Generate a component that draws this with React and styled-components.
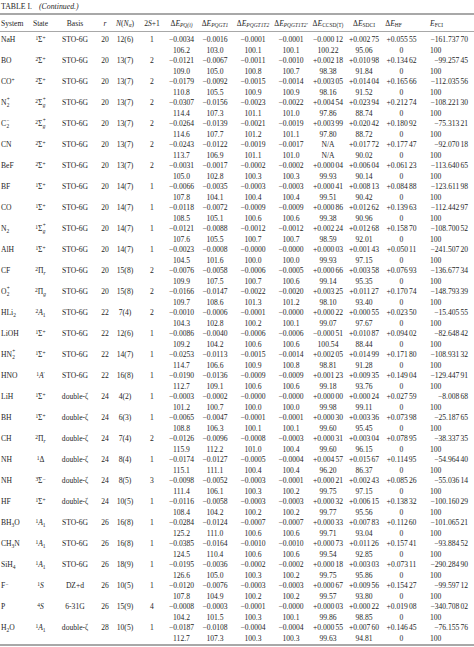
import React from "react";
import styled, { createGlobalStyle } from "styled-components";

const GlobalStyle = createGlobalStyle`
  body {
    margin: 0;
    background: #fff;
    font-family: "Liberation Serif", "Times New Roman", serif;
    color: #262626;
  }
`;

const Page = styled.div`
  width: 474px;
  height: 647px;
  overflow: hidden;
`;

const Caption = styled.div`
  font-size: 7.8px;
  line-height: 13px;
  height: 13px;
  padding-left: 1px;
  em {
    margin-left: 5px;
  }
`;

const Table = styled.table`
  width: 474px;
  table-layout: fixed;
  border-collapse: collapse;
  font-size: 7.6px;
  border-bottom: 2px solid #a8a8a8;
`;

const HeadRow = styled.tr`
  border-top: 2px solid #a8a8a8;
  border-bottom: 1px solid #a8a8a8;
  th {
    height: 15px;
    padding: 1px 0 0;
    font-weight: normal;
    white-space: nowrap;
    line-height: 10px;
  }
`;

const Row = styled.tr`
  td {
    height: 10.5px;
    padding-top: ${(p) => (p.$first ? "3px" : "0")};
  }
`;

const Cell = styled.td`
  padding: 0;
  line-height: 10.5px;
  white-space: nowrap;
  word-spacing: -0.9px;
  text-align: ${(p) => p.$align || "center"};
  padding-left: ${(p) => p.$indent || 0}px;
  padding-right: ${(p) => p.$right || 0}px;
`;

const Head = styled.th`
  text-align: ${(p) => p.$align || "center"};
  padding-left: ${(p) => p.$indent || 0}px !important;
  padding-right: ${(p) => p.$right || 0}px !important;
`;

const Sup = styled.span`
  font-size: 0.72em;
  position: relative;
  top: -0.42em;
`;

const Sub = styled.span`
  font-size: 0.72em;
  position: relative;
  top: 0.28em;
  font-style: ${(p) => (p.$italic ? "italic" : "normal")};
`;

const Stack = styled.span`
  display: inline-block;
  position: relative;
  width: 3.2px;
  height: 1px;
  margin-left: 0.3px;
  span {
    position: absolute;
    left: 0;
    font-size: 5.3px;
    line-height: 1;
  }
  span:first-child {
    top: -6.8px;
  }
  span:last-child {
    top: -1.1px;
  }
`;

const It = styled.i`
  font-style: italic;
`;

const SupSub = ({ sup, sub }) => (
  <Stack>
    <span>{sup}</span>
    <span>{sub}</span>
  </Stack>
);

const State = ({ pre, sym, sup, sub, it }) => (
  <>
    <Sup>{pre}</Sup>
    {it ? <It>{sym}</It> : sym}
    {sup && sub ? <SupSub sup={sup} sub={sub} /> : null}
    {sup && !sub ? <Sup>{sup}</Sup> : null}
    {sub && !sup ? <Sub $italic={/[a-z]/.test(sub)}>{sub}</Sub> : null}
  </>
);

const S = (p) => <State pre={p.pre} sym="Σ" sup={p.sup || "+"} sub={p.sub} />;
const A1 = () => <State pre="1" sym="A" it sub="1" />;

const DE = ({ sub, italic }) => (
  <>
    Δ<It>E</It>
    <Sub $italic={italic}>{sub}</Sub>
  </>
);

const rows = [
  ["NaH", <S pre="1" />, "STO-6G", 20, "12(6)", 1, ["−0.0034", "−0.0016", "−0.0001", "−0.0001", "−0.000 12", "+0.002 75", "+0.055 55", "−161.737 70"], ["106.2", "103.0", "100.1", "100.1", "100.22", "95.06", "0", "100"]],
  ["BO", <S pre="2" />, "STO-6G", 20, "13(7)", 2, ["−0.0121", "−0.0067", "−0.0011", "−0.0010", "+0.002 18", "+0.010 98", "+0.134 62", "−99.257 45"], ["109.0", "105.0", "100.8", "100.7", "98.38", "91.84", "0", "100"]],
  [<>CO<Sup>+</Sup></>, <S pre="2" />, "STO-6G", 20, "13(7)", 2, ["−0.0179", "−0.0092", "−0.0015", "−0.0014", "+0.003 05", "+0.014 04", "+0.165 66", "−112.035 56"], ["110.8", "105.5", "100.9", "100.9", "98.16", "91.52", "0", "100"]],
  [<>N<SupSub sup="+" sub="2" /></>, <S pre="2" sub={<It>g</It>} />, "STO-6G", 20, "13(7)", 2, ["−0.0307", "−0.0156", "−0.0023", "−0.0022", "+0.004 54", "+0.023 94", "+0.212 74", "−108.221 30"], ["114.4", "107.3", "101.1", "101.0", "97.86", "88.74", "0", "100"]],
  [<>C<SupSub sup="−" sub="2" /></>, <S pre="2" sub={<It>g</It>} />, "STO-6G", 20, "13(7)", 2, ["−0.0264", "−0.0139", "−0.0021", "−0.0019", "+0.003 99", "+0.020 42", "+0.180 92", "−75.313 21"], ["114.6", "107.7", "101.2", "101.1", "97.80", "88.72", "0", "100"]],
  ["CN", <S pre="2" />, "STO-6G", 20, "13(7)", 2, ["−0.0243", "−0.0122", "−0.0019", "−0.0017", "N/A", "+0.017 72", "+0.177 47", "−92.070 18"], ["113.7", "106.9", "101.1", "101.0", "N/A", "90.02", "0", "100"]],
  ["BeF", <S pre="2" />, "STO-6G", 20, "13(7)", 2, ["−0.0031", "−0.0017", "−0.0002", "−0.0002", "+0.000 04", "+0.006 04", "+0.061 23", "−113.640 65"], ["105.0", "102.8", "100.3", "100.3", "99.93", "90.14", "0", "100"]],
  ["BF", <S pre="1" />, "STO-6G", 20, "14(7)", 1, ["−0.0066", "−0.0035", "−0.0003", "−0.0003", "+0.000 41", "+0.008 13", "+0.084 88", "−123.611 98"], ["107.8", "104.1", "100.4", "100.4", "99.51", "90.42", "0", "100"]],
  ["CO", <S pre="1" />, "STO-6G", 20, "14(7)", 1, ["−0.0118", "−0.0072", "−0.0009", "−0.0009", "+0.000 86", "+0.012 62", "+0.139 63", "−112.442 97"], ["108.5", "105.1", "100.6", "100.6", "99.38", "90.96", "0", "100"]],
  [<>N<Sub>2</Sub></>, <S pre="1" sub={<It>g</It>} />, "STO-6G", 20, "14(7)", 1, ["−0.0121", "−0.0088", "−0.0012", "−0.0012", "+0.002 24", "+0.012 68", "+0.158 70", "−108.700 52"], ["107.6", "105.5", "100.7", "100.7", "98.59", "92.01", "0", "100"]],
  ["AlH", <S pre="1" />, "STO-6G", 20, "14(7)", 1, ["−0.0023", "−0.0008", "−0.0000", "−0.0000", "+0.000 03", "+0.001 43", "+0.050 11", "−241.507 20"], ["104.5", "101.6", "100.0", "100.0", "99.93", "97.15", "0", "100"]],
  ["CF", <State pre="2" sym="Π" sub="r" />, "STO-6G", 20, "15(8)", 2, ["−0.0076", "−0.0058", "−0.0006", "−0.0005", "+0.000 66", "+0.003 58", "+0.076 93", "−136.677 34"], ["109.9", "107.5", "100.7", "100.6", "99.14", "95.35", "0", "100"]],
  [<>O<SupSub sup="+" sub="2" /></>, <State pre="2" sym="Π" sub="g" />, "STO-6G", 20, "15(8)", 2, ["−0.0166", "−0.0147", "−0.0022", "−0.0020", "+0.003 25", "+0.011 27", "+0.170 74", "−148.793 39"], ["109.7", "108.6", "101.3", "101.2", "98.10", "93.40", "0", "100"]],
  [<>HLi<Sub>2</Sub></>, <State pre="2" sym="A" it sub="1" />, "STO-6G", 22, "7(4)", 2, ["−0.0010", "−0.0006", "−0.0001", "−0.0000", "+0.000 22", "+0.000 55", "+0.023 50", "−15.405 55"], ["104.3", "102.8", "100.2", "100.1", "99.07", "97.67", "0", "100"]],
  ["LiOH", <S pre="1" />, "STO-6G", 22, "12(6)", 1, ["−0.0086", "−0.0040", "−0.0006", "−0.0006", "−0.000 51", "+0.010 87", "+0.094 02", "−82.648 42"], ["109.2", "104.2", "100.6", "100.6", "100.54", "88.44", "0", "100"]],
  [<>HN<SupSub sup="+" sub="2" /></>, <S pre="1" />, "STO-6G", 22, "14(7)", 1, ["−0.0253", "−0.0113", "−0.0015", "−0.0014", "+0.002 05", "+0.014 99", "+0.171 80", "−108.931 32"], ["114.7", "106.6", "100.9", "100.8", "98.81", "91.28", "0", "100"]],
  ["HNO", <State pre="1" sym="A" it sup="′" />, "STO-6G", 22, "16(8)", 1, ["−0.0190", "−0.0136", "−0.0009", "−0.0009", "+0.001 23", "+0.009 35", "+0.149 04", "−129.447 91"], ["112.7", "109.1", "100.6", "100.6", "99.18", "93.76", "0", "100"]],
  ["LiH", <S pre="1" />, "double-ζ", 24, "4(2)", 1, ["−0.0003", "−0.0002", "−0.0000", "−0.0000", "+0.000 00", "+0.000 24", "+0.027 59", "−8.008 68"], ["101.2", "100.7", "100.0", "100.0", "99.98", "99.11", "0", "100"]],
  ["BH", <S pre="1" />, "double-ζ", 24, "6(3)", 1, ["−0.0065", "−0.0047", "−0.0001", "−0.0001", "+0.000 30", "+0.003 36", "+0.073 98", "−25.187 65"], ["108.8", "106.3", "100.1", "100.1", "99.60", "95.45", "0", "100"]],
  ["CH", <State pre="2" sym="Π" sub="r" />, "double-ζ", 24, "7(4)", 2, ["−0.0126", "−0.0096", "−0.0008", "−0.0003", "+0.000 31", "+0.003 04", "+0.078 95", "−38.337 35"], ["115.9", "112.2", "101.0", "100.4", "99.60", "96.15", "0", "100"]],
  ["NH", <State pre="1" sym="Δ" />, "double-ζ", 24, "8(4)", 1, ["−0.0174", "−0.0127", "−0.0005", "−0.0004", "+0.004 57", "+0.015 67", "+0.114 95", "−54.964 40"], ["115.1", "111.1", "100.4", "100.4", "96.20", "86.37", "0", "100"]],
  ["NH", <S pre="3" sup="−" />, "double-ζ", 24, "8(5)", 3, ["−0.0098", "−0.0052", "−0.0003", "−0.0001", "+0.000 21", "+0.002 43", "+0.085 26", "−55.036 14"], ["111.4", "106.1", "100.3", "100.2", "99.75", "97.15", "0", "100"]],
  ["HF", <S pre="1" />, "double-ζ", 24, "10(5)", 1, ["−0.0116", "−0.0058", "−0.0003", "−0.0003", "+0.000 32", "+0.006 15", "+0.138 32", "−100.160 29"], ["108.4", "104.2", "100.2", "100.2", "99.77", "95.56", "0", "100"]],
  [<>BH<Sub>3</Sub>O</>, <A1 />, "STO-6G", 26, "16(8)", 1, ["−0.0284", "−0.0124", "−0.0007", "−0.0007", "+0.000 33", "+0.007 83", "+0.112 60", "−101.065 21"], ["125.2", "111.0", "100.6", "100.6", "99.71", "93.04", "0", "100"]],
  [<>CH<Sub>3</Sub>N</>, <A1 />, "STO-6G", 26, "16(8)", 1, ["−0.0385", "−0.0164", "−0.0010", "−0.0010", "+0.000 73", "+0.011 26", "+0.157 41", "−93.884 52"], ["124.5", "110.4", "100.6", "100.6", "99.54", "92.85", "0", "100"]],
  [<>SiH<Sub>4</Sub></>, <A1 />, "STO-6G", 26, "18(9)", 1, ["−0.0195", "−0.0036", "−0.0002", "−0.0002", "+0.000 18", "+0.003 03", "+0.073 11", "−290.284 90"], ["126.6", "105.0", "100.3", "100.2", "99.75", "95.86", "0", "100"]],
  [<>F<Sup>−</Sup></>, <State pre="1" sym="S" it />, "DZ+d", 26, "10(5)", 1, ["−0.0120", "−0.0076", "−0.0003", "−0.0003", "+0.000 67", "+0.009 56", "+0.154 27", "−99.597 12"], ["107.8", "104.9", "100.2", "100.2", "99.57", "93.80", "0", "100"]],
  ["P", <State pre="4" sym="S" it />, "6-31G", 26, "15(9)", 4, ["−0.0008", "−0.0003", "−0.0001", "−0.0000", "+0.000 03", "+0.000 22", "+0.019 08", "−340.708 02"], ["104.2", "101.5", "100.3", "100.1", "99.86", "98.85", "0", "100"]],
  [<>H<Sub>2</Sub>O</>, <A1 />, "double-ζ", 28, "10(5)", 1, ["−0.0187", "−0.0108", "−0.0004", "−0.0004", "+0.000 55", "+0.007 60", "+0.146 45", "−76.155 76"], ["112.7", "107.3", "100.3", "100.3", "99.63", "94.81", "0", "100"]],
];

const widths = [30, 21, 48, 12, 28, 26, 33, 34, 42, 34, 40, 32, 43, 51];

const ValueCells = ({ vals, pct }) =>
  vals.map((v, i) =>
    i === 7 ? (
      pct ? (
        <Cell key={i} $align="left" $indent={7}>{v}</Cell>
      ) : (
        <Cell key={i} $align="right" $right={6}>{v}</Cell>
      )
    ) : (
      <Cell key={i}>{v}</Cell>
    )
  );

export default function App() {
  return (
    <Page>
      <GlobalStyle />
      <Caption>
        TABLE I. <em>(Continued.)</em>
      </Caption>
      <Table>
        <colgroup>
          {widths.map((w, i) => (
            <col key={i} style={{ width: w }} />
          ))}
        </colgroup>
        <thead>
          <HeadRow>
            <Head $align="left" $indent={1}>System</Head>
            <Head>State</Head>
            <Head>Basis</Head>
            <Head><It>r</It></Head>
            <Head>
              <It>N</It>(<It>N</It><Sub $italic>α</Sub>)
            </Head>
            <Head>
              2<It>S</It>+1
            </Head>
            <Head><DE sub="PQ(i)" italic /></Head>
            <Head><DE sub="PQGT1" italic /></Head>
            <Head><DE sub="PQGT1T2" italic /></Head>
            <Head><DE sub="PQGT1T2′" italic /></Head>
            <Head><DE sub="CCSD(T)" /></Head>
            <Head><DE sub="SDCI" /></Head>
            <Head $right={16}><DE sub="HF" /></Head>
            <Head $align="left" $indent={7}>
              <It>E</It>
              <Sub>FCI</Sub>
            </Head>
          </HeadRow>
        </thead>
        <tbody>
          {rows.map(([sys, st, basis, r, n, m, vals, pct], i) => (
            <React.Fragment key={i}>
              <Row $first={i === 0}>
                <Cell $align="left" $indent={1}>{sys}</Cell>
                <Cell>{st}</Cell>
                <Cell>{basis}</Cell>
                <Cell>{r}</Cell>
                <Cell>{n}</Cell>
                <Cell>{m}</Cell>
                <ValueCells vals={vals} />
              </Row>
              <Row>
                <Cell colSpan={6} />
                <ValueCells vals={pct} pct />
              </Row>
            </React.Fragment>
          ))}
        </tbody>
      </Table>
    </Page>
  );
}
